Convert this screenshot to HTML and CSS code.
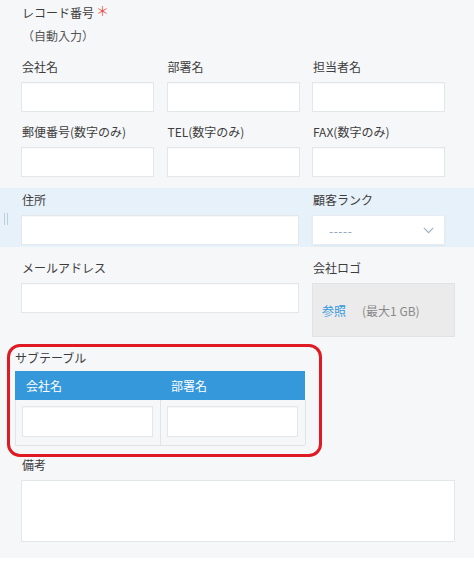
FILE: index.html
```html
<!DOCTYPE html>
<html lang="ja">
<head>
<meta charset="utf-8">
<title>フォーム</title>
<link rel="stylesheet" href="styles.css">
</head>
<body>
<div class="page">
  <div class="record">
    <div class="label">レコード番号<span class="req">＊</span></div>
    <div class="auto">（自動入力）</div>
  </div>

  <div class="row grid3 row1">
    <div class="field"><div class="label">会社名</div><div class="input"></div></div>
    <div class="field"><div class="label">部署名</div><div class="input"></div></div>
    <div class="field"><div class="label">担当者名</div><div class="input"></div></div>
  </div>

  <div class="row grid3 row2">
    <div class="field"><div class="label">郵便番号(数字のみ)</div><div class="input"></div></div>
    <div class="field"><div class="label">TEL(数字のみ)</div><div class="input"></div></div>
    <div class="field"><div class="label">FAX(数字のみ)</div><div class="input"></div></div>
  </div>

  <div class="band">
    <span class="handle"></span>
    <div class="row grid-wide">
      <div class="field"><div class="label">住所</div><div class="input"></div></div>
      <div class="field"><div class="label">顧客ランク</div>
        <div class="select">
          <span class="dash">-----</span>
          <svg class="chev" width="11" height="7" viewBox="0 0 11 7"><path d="M0.8 0.8 L5.5 5.6 L10.2 0.8" fill="none" stroke="#9bb0c0" stroke-width="1.1"/></svg>
        </div>
      </div>
    </div>
  </div>

  <div class="row grid-logo row4">
    <div class="field"><div class="label">メールアドレス</div><div class="input"></div></div>
    <div class="field"><div class="label">会社ロゴ</div>
      <div class="upload"><span class="browse">参照</span><span class="limit">(最大1 GB)</span></div>
    </div>
  </div>

  <div class="subtable">
    <div class="label">サブテーブル</div>
    <div class="table">
      <div class="thead">
        <div class="th">会社名</div>
        <div class="th">部署名</div>
      </div>
      <div class="tbody">
        <div class="td"><div class="input small"></div></div>
        <div class="td"><div class="input small"></div></div>
      </div>
    </div>
  </div>

  <div class="row memo">
    <div class="field"><div class="label">備考</div><div class="textarea"></div></div>
  </div>

  <div class="annot"></div>
</div>
</body>
</html>
```

FILE: styles.css
```css
* { box-sizing: border-box; }
html, body { margin: 0; padding: 0; }
body {
  background: #ffffff;
  font-family: "Noto Sans CJK JP", "Noto Sans", "DejaVu Sans", sans-serif;
  font-size: 12px;
  color: #3d3d3d;
}
.page {
  position: relative;
  width: 474px;
  height: 558px;
  background: #f6f7f9;
  overflow: hidden;
}
.label {
  line-height: 16px;
  height: 16px;
  white-space: nowrap;
}
.req {
  display: inline-block;
  color: #e4574b;
  margin-left: 2px;
  font-size: 13px;
  line-height: 16px;
  vertical-align: top;
  position: relative;
  top: -2px;
}
.record {
  padding: 5px 0 0 22px;
}
.auto {
  margin-top: 7px;
  line-height: 16px;
  color: #555;
}
.row {
  padding-left: 21px;
}
.field .label {
  padding-left: 1px;
  margin-bottom: 7px;
}
.grid3 {
  display: grid;
  grid-template-columns: 133px 133px 133px;
  column-gap: 12.5px;
}
.row1 { margin-top: 15px; }
.row2 { margin-top: 12px; }
.input {
  height: 30px;
  background: #fff;
  border: 1px solid #e3e7e9;
  box-shadow: inset 0 1px 1px rgba(0,0,0,0.03);
}
.band {
  position: relative;
  margin-top: 11px;
  padding: 4px 0 2px;
  background: #e7f1fa;
}
.handle {
  position: absolute;
  left: 4px;
  top: 25px;
  width: 4px;
  height: 12px;
  border-left: 1px solid #b9cee0;
  border-right: 1px solid #b9cee0;
}
.grid-wide {
  display: grid;
  grid-template-columns: 278px 133px;
  column-gap: 13px;
}
.select {
  height: 30px;
  background: #fff;
  border: 1px solid #e6ecf1;
  box-shadow: 0 1px 2px rgba(0,0,0,0.05);
  display: flex;
  align-items: center;
  justify-content: space-between;
  padding: 0 10px 0 16px;
}
.dash {
  color: #8aa1b4;
  letter-spacing: 0.5px;
}
.chev { display: block; }
.grid-logo {
  display: grid;
  grid-template-columns: 278px 143px;
  column-gap: 13px;
}
.row4 { margin-top: 13px; }
.upload {
  height: 54px;
  background: #ebebeb;
  border: 1px solid #e2e2e2;
  display: flex;
  align-items: center;
  padding-left: 9px;
  gap: 16px;
}
.browse { color: #3498db; }
.limit { color: #888; }
.subtable {
  margin-top: 13px;
  padding-left: 15px;
}
.subtable .label {
  margin-bottom: 5px;
}
.table {
  width: 290px;
}
.thead {
  display: grid;
  grid-template-columns: 145px 145px;
  background: #3498db;
  height: 29px;
}
.th {
  color: #fff;
  line-height: 29px;
  padding-left: 11px;
}
.tbody {
  display: grid;
  grid-template-columns: 145px 145px;
  border-left: 1px solid #dfe4e7;
  border-bottom: 1px solid #dfe4e7;
}
.td {
  padding: 6px 7px 8px 6px;
  border-right: 1px solid #dfe4e7;
}
.input.small { height: 31px; }
.memo { margin-top: 11px; }
.textarea {
  width: 434px;
  height: 62px;
  background: #fff;
  border: 1px solid #e3e7e9;
}
.annot {
  position: absolute;
  left: 7px;
  top: 344px;
  width: 315px;
  height: 113px;
  border: 3px solid #df1a22;
  border-radius: 13px;
  pointer-events: none;
}
```
